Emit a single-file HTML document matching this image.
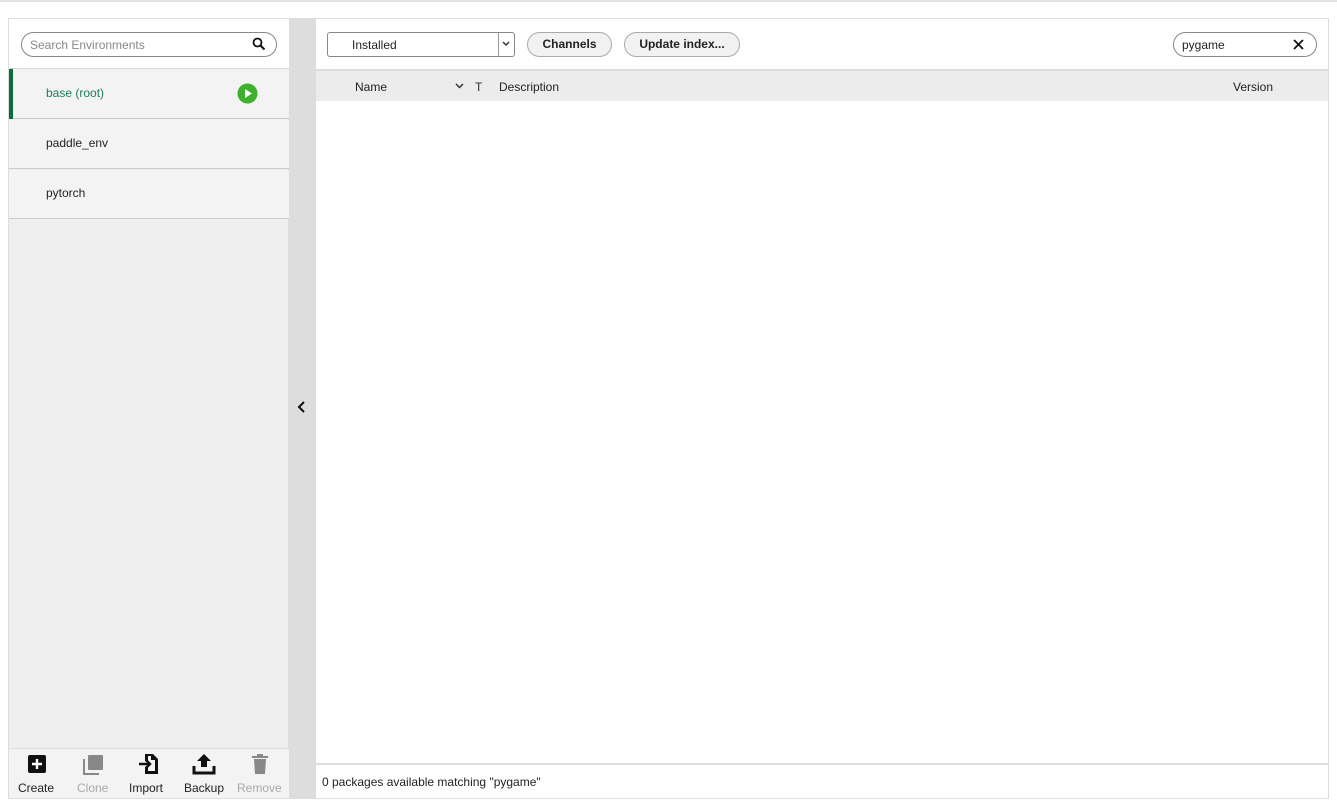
<!DOCTYPE html>
<html><head><style>
*{margin:0;padding:0;box-sizing:border-box}
body{width:1337px;height:807px;background:#fff;font-family:"Liberation Sans",sans-serif;font-size:12px;color:#222;position:relative;overflow:hidden}
.a{position:absolute}
</style></head><body>
<div class="a" style="left:0;top:0;width:1337px;height:2px;background:#e4e4e4"></div>
<!-- left panel -->
<div class="a" style="left:8px;top:18px;width:281px;height:781px;border:1px solid #ddd;background:#efefef"></div>
<div class="a" style="left:9px;top:19px;width:280px;height:50px;background:#fff;border-bottom:1px solid #d6d6d6"></div>
<div class="a" style="left:21px;top:32px;width:256px;height:25px;border:1px solid #888;border-radius:13px;background:#fff"></div>
<div class="a" style="left:30px;top:38px;color:#888">Search Environments</div>
<svg class="a" style="left:252px;top:37px" width="14" height="14" viewBox="0 0 14 14"><circle cx="5.5" cy="5.5" r="4" fill="none" stroke="#111" stroke-width="1.8"/><path d="M8.5 8.5L12.5 12.5" stroke="#111" stroke-width="2"/></svg>
<div class="a" style="left:9px;top:69px;width:280px;height:50px;background:#f3f3f3;border-bottom:1px solid #ccc"></div>
<div class="a" style="left:9px;top:69px;width:4px;height:50px;background:#0a6e3a"></div>
<div class="a" style="left:46px;top:86px;color:#1f7a5a;font-size:12px">base (root)</div>
<svg class="a" style="left:237px;top:83px" width="21" height="21" viewBox="0 0 21 21"><circle cx="10.5" cy="10.5" r="10" fill="#3eb02d"/><path d="M8 6L15 10.5L8 15Z" fill="#fff"/></svg>
<div class="a" style="left:9px;top:120px;width:280px;height:49px;background:#f3f3f3;border-bottom:1px solid #ccc"></div>
<div class="a" style="left:46px;top:136px">paddle_env</div>
<div class="a" style="left:9px;top:170px;width:280px;height:49px;background:#f3f3f3;border-bottom:1px solid #ccc"></div>
<div class="a" style="left:46px;top:186px">pytorch</div>
<div class="a" style="left:9px;top:748px;width:280px;height:50px;background:#f3f3f3;border-top:1px solid #ddd"></div>
<svg class="a" style="left:27px;top:754px" width="20" height="20" viewBox="0 0 20 20"><rect x="1" y="1" width="18" height="18" rx="2" fill="#111"/><path d="M10 5V15M5 10H15" stroke="#fff" stroke-width="2.4"/></svg>
<svg class="a" style="left:82px;top:754px" width="22" height="22" viewBox="0 0 22 22"><rect x="6" y="1" width="15" height="15" rx="1" fill="#888"/><path d="M2 5V20H17" fill="none" stroke="#888" stroke-width="2"/></svg>
<svg class="a" style="left:138px;top:753px" width="22" height="22" viewBox="0 0 22 22"><path d="M7 1H15L20 6V21H7V14H10V18H17V7H13V3H10V8H7Z" fill="#111"/><path d="M1 11H11M8 7L12 11L8 15" stroke="#111" stroke-width="2.4" fill="none"/></svg>
<svg class="a" style="left:192px;top:753px" width="24" height="22" viewBox="0 0 24 22"><path d="M12 1L5 8H9V14H15V8H19Z" fill="#111"/><path d="M2 13V20H22V13" fill="none" stroke="#111" stroke-width="3"/></svg>
<svg class="a" style="left:251px;top:754px" width="18" height="20" viewBox="0 0 18 20"><rect x="1" y="2" width="16" height="2" fill="#888"/><rect x="6" y="0" width="6" height="3" fill="#888"/><path d="M3 5H15L14 20H4Z" fill="#888"/></svg>
<div class="a" style="left:18px;top:781px;font-size:12px">Create</div>
<div class="a" style="left:77px;top:781px;color:#aaa">Clone</div>
<div class="a" style="left:129px;top:781px">Import</div>
<div class="a" style="left:184px;top:781px">Backup</div>
<div class="a" style="left:237px;top:781px;color:#aaa">Remove</div>
<!-- divider -->
<div class="a" style="left:289px;top:18px;width:26px;height:781px;background:#ddd"></div>
<svg class="a" style="left:297px;top:401px" width="10" height="12" viewBox="0 0 10 12"><path d="M7 1L2 6L7 11" fill="none" stroke="#111" stroke-width="2"/></svg>
<!-- right -->
<div class="a" style="left:315px;top:18px;width:1014px;height:781px;border:1px solid #ddd;background:#fff"></div>
<div class="a" style="left:327px;top:32px;width:188px;height:25px;border:1px solid #888;border-radius:3px"></div>
<div class="a" style="left:498px;top:33px;width:1px;height:23px;background:#999"></div>
<div class="a" style="left:352px;top:38px">Installed</div>
<svg class="a" style="left:502px;top:41px" width="8" height="6" viewBox="0 0 8 6"><path d="M1 1L4 4L7 1" fill="none" stroke="#333" stroke-width="1.5"/></svg>
<div class="a" style="left:527px;top:32px;width:85px;height:25px;border:1px solid #aaa;border-radius:13px;background:#f2f2f2;text-align:center;line-height:23px;font-weight:bold;font-size:12px">Channels</div>
<div class="a" style="left:624px;top:32px;width:116px;height:25px;border:1px solid #aaa;border-radius:13px;background:#f2f2f2;text-align:center;line-height:23px;font-weight:bold;font-size:12px">Update index...</div>
<div class="a" style="left:1173px;top:32px;width:144px;height:25px;border:1px solid #888;border-radius:13px"></div>
<div class="a" style="left:1182px;top:38px">pygame</div>
<svg class="a" style="left:1293px;top:39px" width="11" height="11" viewBox="0 0 11 11"><path d="M1 1L10 10M10 1L1 10" stroke="#111" stroke-width="1.8"/></svg>
<div class="a" style="left:316px;top:69px;width:1012px;height:32px;background:#ececec;border-top:2px solid #ddd"></div>
<div class="a" style="left:355px;top:80px">Name</div>
<svg class="a" style="left:455px;top:83px" width="9" height="6" viewBox="0 0 9 6"><path d="M1 1L4.5 4.5L8 1" fill="none" stroke="#333" stroke-width="1.5"/></svg>
<div class="a" style="left:475px;top:80px;color:#333">T</div>
<div class="a" style="left:499px;top:80px">Description</div>
<div class="a" style="left:1233px;top:80px">Version</div>
<div class="a" style="left:316px;top:763px;width:1012px;height:2px;background:#ddd"></div>
<div class="a" style="left:322px;top:775px">0 packages available matching "pygame"</div>
</body></html>
